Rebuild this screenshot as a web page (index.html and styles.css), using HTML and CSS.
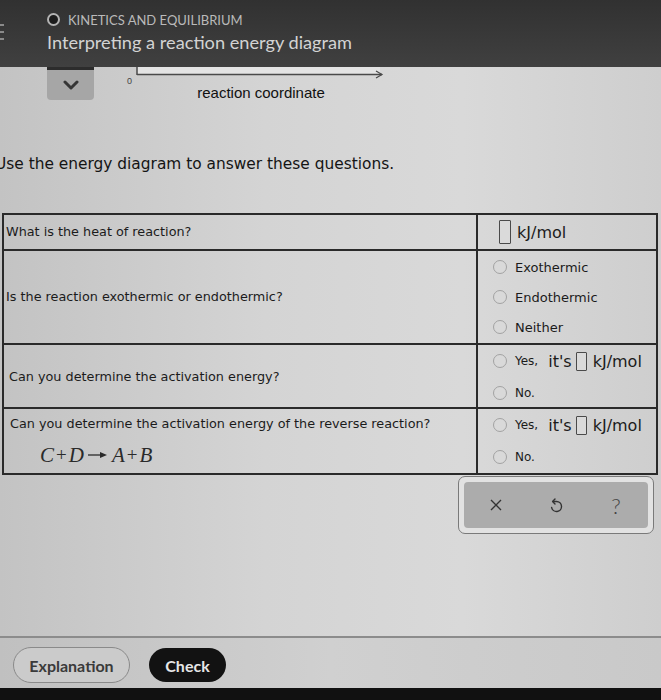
FILE: index.html
```html
<!DOCTYPE html>
<html lang="en">
<head>
    <meta charset="UTF-8">
    <meta name="viewport" content="width=device-width, initial-scale=1.0">
    <title>Interpreting a reaction energy diagram</title>
    <link rel="stylesheet" href="styles.css">
</head>
<body>
<div class="page">
    <header class="topbar">
        <span class="menu"><i></i><i></i><i></i></span>
        <div class="titles">
            <div class="crumb"><span class="dot"></span>KINETICS AND EQUILIBRIUM</div>
            <h1>Interpreting a reaction energy diagram</h1>
        </div>
    </header>

    <main class="content">
        <div class="diagram">
            <div class="tab">
                <svg width="16" height="10" viewBox="0 0 16 10"><polyline points="2,2 8,8 14,2" fill="none" stroke="#353535" stroke-width="3" stroke-linecap="round" stroke-linejoin="round"/></svg>
            </div>
            <span class="zero">0</span>
            <div class="axis">
                <svg width="250" height="12" viewBox="0 0 250 12">
                    <rect x="1" y="0" width="243" height="7" fill="#e4e4e4"/>
                    <line x1="1" y1="0" x2="1" y2="8" stroke="#4a4a4a" stroke-width="1.5"/>
                    <line x1="1" y1="7.5" x2="246" y2="7.5" stroke="#4a4a4a" stroke-width="1.5"/>
                    <polyline points="240,4 246,7.5 240,11" fill="none" stroke="#4a4a4a" stroke-width="1.2"/>
                </svg>
                <div class="axis-label">reaction coordinate</div>
            </div>
        </div>

        <p class="prompt">Use the energy diagram to answer these questions.</p>

        <div class="qtable">
            <div class="qrow row-heat">
                <div class="q">What is the heat of reaction?</div>
                <div class="a a-inline"><span class="blank"></span><span class="unit">kJ/mol</span></div>
            </div>
            <div class="qrow row-sign">
                <div class="q">Is the reaction exothermic or endothermic?</div>
                <div class="a">
                    <label class="opt"><span class="radio"></span>Exothermic</label>
                    <label class="opt"><span class="radio"></span>Endothermic</label>
                    <label class="opt"><span class="radio"></span>Neither</label>
                </div>
            </div>
            <div class="qrow row-act">
                <div class="q">Can you determine the activation energy?</div>
                <div class="a">
                    <label class="opt opt-sm"><span class="radio"></span>Yes,<span class="its">it's</span><span class="blank blank-sm"></span><span class="unit">kJ/mol</span></label>
                    <label class="opt opt-sm"><span class="radio"></span>No.</label>
                </div>
            </div>
            <div class="qrow row-rev">
                <div class="q q-stack">
                    <span>Can you determine the activation energy of the reverse reaction?</span>
                    <span class="eq"><i>C</i><span class="plus">+</span><i>D</i><svg class="arrow" width="20" height="8" viewBox="0 0 20 8"><line x1="0" y1="4" x2="13" y2="4" stroke="#2a2a2a" stroke-width="1.3"/><polygon points="12,1 19,4 12,7" fill="#2a2a2a"/></svg><i>A</i><span class="plus">+</span><i>B</i></span>
                </div>
                <div class="a">
                    <label class="opt opt-sm"><span class="radio"></span>Yes,<span class="its">it's</span><span class="blank blank-sm"></span><span class="unit">kJ/mol</span></label>
                    <label class="opt opt-sm"><span class="radio"></span>No.</label>
                </div>
            </div>
        </div>

        <div class="tools">
            <div class="tools-inner">
                <span class="tool">
                    <svg width="12" height="12" viewBox="0 0 12 12"><path d="M1 1 L11 11 M11 1 L1 11" stroke="#333" stroke-width="1.4" fill="none"/></svg>
                </span>
                <span class="tool">
                    <svg width="14" height="16" viewBox="0 0 14 16"><path d="M4 4.5 H7.5 A5 5 0 1 1 2.6 10.4" stroke="#333" stroke-width="1.4" fill="none" stroke-linecap="round"/><polyline points="6,2 3.6,4.5 6,7" stroke="#333" stroke-width="1.4" fill="none" stroke-linecap="round" stroke-linejoin="round"/></svg>
                </span>
                <span class="tool tool-help">?</span>
            </div>
        </div>
    </main>

    <footer class="actions">
        <button class="btn btn-outline">Explanation</button>
        <button class="btn btn-dark">Check</button>
    </footer>
    <div class="bottom-edge"></div>
</div>
</body>
</html>
```

FILE: styles.css
```css
* { box-sizing: border-box; }
body {
    margin: 0;
    width: 661px;
    height: 700px;
    overflow: hidden;
    font-family: "DejaVu Sans", Verdana, sans-serif;
    color: #1b1b1b;
    background: #d0d0d0;
}
.page {
    display: flex;
    flex-direction: column;
    height: 700px;
    background: linear-gradient(90deg, #c3c3c3 0%, #d4d4d4 40%, #d9d9d9 70%, #cecece 100%);
}

/* header */
.topbar {
    height: 67px;
    flex-shrink: 0;
    display: flex;
    align-items: flex-start;
    padding-top: 12px;
    background: linear-gradient(180deg, #313131, #404040);
}
.menu {
    width: 4px;
    display: flex;
    flex-direction: column;
    gap: 5px;
    padding-top: 12px;
}
.menu i { display: block; height: 2px; background: #8a8a8a; }
.titles { margin-left: 43px; font-family: Lato, "Open Sans", sans-serif; }
.crumb {
    display: flex;
    align-items: center;
    height: 15px;
    font-size: 13px;
    color: #bababa;
}
.dot {
    width: 13px;
    height: 13px;
    border-radius: 50%;
    background: #1c1c1c;
    border: 2px solid #b3b3b3;
    margin-right: 8px;
}
.titles h1 {
    margin: 4px 0 0;
    font-size: 18.2px;
    line-height: 22px;
    font-weight: 400;
    color: #d3d3d3;
}

/* diagram strip */
.content { flex: 1; }
.diagram { height: 87px; display: flex; align-items: flex-start; }
.tab {
    margin-left: 47px;
    width: 47px;
    height: 33px;
    background: #a6a6a6;
    border-top: 3px solid #2c2c2c;
    border-radius: 0 0 4px 4px;
    display: flex;
    align-items: center;
    justify-content: center;
}
.zero {
    margin-left: 33px;
    width: 9px;
    margin-top: 9px;
    font-family: "Liberation Sans", Arial, sans-serif;
    font-size: 9px;
    line-height: 10px;
    color: #444;
}
.axis { width: 250px; display: flex; flex-direction: column; align-items: center; }
.axis svg { display: block; }
.axis-label {
    margin-top: 5px;
    font-family: "Liberation Sans", Arial, sans-serif;
    font-size: 15px;
    line-height: 18px;
    color: #111;
}

.prompt {
    margin: 0 0 0 -5px;
    font-size: 15.4px;
    line-height: 21px;
    color: #141414;
}

/* question table */
.qtable {
    margin: 38px 3px 0 2px;
    border-left: 2px solid #2a2a2a;
    border-right: 2px solid #2a2a2a;
    border-bottom: 2px solid #2a2a2a;
}
.qrow {
    display: grid;
    grid-template-columns: 474px 1fr;
    border-top: 2px solid #2a2a2a;
}
.row-heat { height: 36px; }
.row-sign { height: 94px; }
.row-act { height: 64px; }
.row-rev { height: 66px; }
.q {
    border-right: 2px solid #2a2a2a;
    padding-left: 2px;
    font-size: 12.8px;
    line-height: 16px;
    display: flex;
    align-items: center;
}
.row-act .q { padding-left: 5px; }
.q-stack {
    flex-direction: column;
    align-items: flex-start;
    padding: 7px 0 0 6px;
}
.eq {
    display: flex;
    align-items: center;
    margin: 12px 0 0 30px;
    height: 22px;
    font-family: "Liberation Serif", "Times New Roman", serif;
    font-size: 21px;
    color: #2a2a2a;
}
.eq i { font-style: italic; }
.eq .plus { margin: 0 2px; font-size: 19px; }
.eq .arrow { margin: 0 4px; }
.a {
    padding-left: 15px;
    display: flex;
    flex-direction: column;
    justify-content: center;
}
.a-inline { flex-direction: row; align-items: center; justify-content: flex-start; padding-left: 21px; }
.opt {
    display: flex;
    align-items: center;
    height: 30px;
    font-size: 13px;
}
.opt-sm { height: 32px; font-size: 12px; }
.radio {
    width: 14px;
    height: 14px;
    border-radius: 50%;
    border: 1px solid #a2a2a2;
    background: #d9d9d9;
    margin-right: 8px;
    flex-shrink: 0;
}
.its { font-size: 16px; margin-left: 10px; }
.blank {
    display: inline-block;
    width: 12px;
    height: 24px;
    border: 1px solid #4a4a4a;
    border-radius: 1px;
    background: #dadada;
    margin-right: 6px;
}
.blank-sm { width: 11px; height: 19px; margin-left: 4px; }
.unit { font-size: 16px; }

/* tool panel */
.tools {
    margin: 1px 0 0 458px;
    width: 196px;
    height: 58px;
    border: 1px solid #7a7a7a;
    border-radius: 7px;
    background: #e2e2e2;
    padding: 5px;
}
.tools-inner {
    height: 100%;
    background: #acacac;
    border-radius: 4px;
    display: flex;
    align-items: center;
    justify-content: center;
}
.tool {
    width: 60px;
    display: flex;
    justify-content: center;
    align-items: center;
}
.tool-help {
    font-family: Lato, "Open Sans", sans-serif;
    font-weight: 300;
    font-size: 22px;
    color: #444;
}

/* footer */
.actions {
    height: 52px;
    flex-shrink: 0;
    border-top: 2px solid #8c8c8c;
    background: linear-gradient(90deg, #c0c0c0, #d0d0d0 50%, #c9c9c9);
    display: flex;
    align-items: center;
    padding: 4px 0 0 13px;
    gap: 19px;
}
.btn {
    height: 36px;
    border-radius: 18px;
    font-family: Lato, "Open Sans", sans-serif;
    font-size: 16px;
    font-weight: 700;
    padding: 0;
    cursor: pointer;
}
.btn-outline { width: 117px; border: 1px solid #8a8a8a; color: #3a3a3a; background: #cbcbcb; }
.btn-dark { width: 77px; height: 34px; border: none; background: #121212; color: #e6e6e6; }
.bottom-edge { height: 12px; flex-shrink: 0; background: #111; }
```
